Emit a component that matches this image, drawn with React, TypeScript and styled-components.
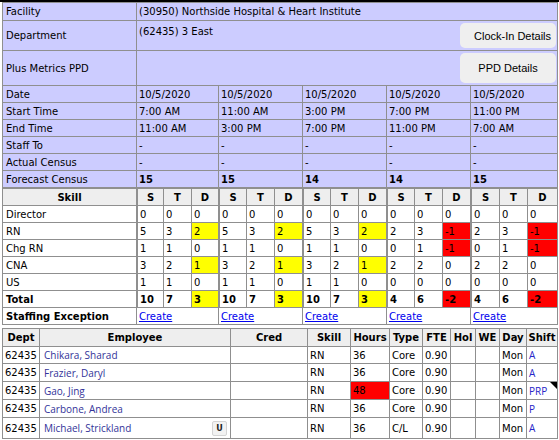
import React from 'react';
import styled, { createGlobalStyle, css } from 'styled-components';

const LINE = '#8f8f8f';
const LAV = '#ccccff';
const HEAD = '#eeeeee';
const YELLOW = '#ffff00';
const RED = '#ff0000';

const GlobalStyle = createGlobalStyle`
  html, body { margin: 0; padding: 0; background: #ffffff; }
  body {
    font-family: "DejaVu Sans", Verdana, sans-serif;
    font-size: 10px;
    color: #000000;
  }
`;

type Tone = 'plain' | 'warn' | 'alert';
const toneBg = (t?: Tone, fallback = '#ffffff') =>
  t === 'warn' ? YELLOW : t === 'alert' ? RED : fallback;

const Page = styled.div`
  width: 559px;
  display: flex;
  flex-direction: column;
`;

const TopRule = styled.div`
  height: 2px;
  background: #000000;
`;

const Sheet = styled.div`
  padding-left: 2px;
  display: flex;
  flex-direction: column;
  gap: 3px;
`;

const SummaryGrid = styled.div`
  display: grid;
  grid-template-columns: 133px 26px 27px 26px repeat(9, 27px) 28px 27px 29px;
  grid-template-rows: 17px 29px 34px repeat(6, 16px) 17px repeat(6, 16px) 16px;
  gap: 1px;
  background: ${LINE};
  border: 1px solid ${LINE};
  width: max-content;
`;

const InfoLabel = styled.div`
  background: ${LAV};
  display: flex;
  align-items: center;
  padding: 0 3px;
  white-space: nowrap;
`;

const InfoValue = styled.div<{ $span: number; $bold?: boolean }>`
  grid-column: span ${p => p.$span};
  background: ${LAV};
  display: flex;
  align-items: center;
  padding: 0 2px;
  white-space: nowrap;
  font-weight: ${p => (p.$bold ? 'bold' : 'normal')};
`;

const DeptValue = styled.div`
  grid-column: span 15;
  background: ${LAV};
  display: flex;
  justify-content: space-between;
  align-items: flex-start;
  padding: 0 1px 0 2px;
`;

const DeptText = styled.span`
  padding-top: 5px;
  white-space: nowrap;
`;

const MetricsValue = styled.div`
  grid-column: span 15;
  background: ${LAV};
  display: flex;
  justify-content: flex-end;
  align-items: center;
  padding-right: 1px;
`;

const ActionButton = styled.button<{ $h: number; $top?: number; $justify?: string; $padL?: number; $padR?: number }>`
  width: 96px;
  height: ${p => p.$h}px;
  margin-top: ${p => p.$top ?? 0}px;
  background: #efefef;
  border: none;
  border-radius: 5px;
  display: flex;
  align-items: center;
  justify-content: ${p => p.$justify ?? 'center'};
  padding: 0 ${p => p.$padR ?? 0}px 0 ${p => p.$padL ?? 0}px;
  font-family: "Liberation Sans", Arial, sans-serif;
  font-size: 11px;
  color: #000000;
  white-space: nowrap;
`;

const SkillHeadLabel = styled.div`
  background: ${HEAD};
  border-top: 1px solid ${LINE};
  display: flex;
  align-items: center;
  justify-content: center;
  font-weight: bold;
`;

const SkillHeadCell = styled.div<{ $groupStart?: boolean }>`
  background: ${HEAD};
  border-top: 1px solid ${LINE};
  ${p => p.$groupStart && css`border-left: 1px solid ${LINE};`}
  display: flex;
  align-items: center;
  justify-content: center;
  font-weight: bold;
`;

const SkillName = styled.div<{ $bold?: boolean }>`
  background: #ffffff;
  display: flex;
  align-items: center;
  padding: 0 3px;
  white-space: nowrap;
  font-weight: ${p => (p.$bold ? 'bold' : 'normal')};
`;

const CountCell = styled.div<{ $tone?: Tone; $groupStart?: boolean; $bold?: boolean }>`
  background: ${p => toneBg(p.$tone)};
  ${p => p.$groupStart && css`border-left: 1px solid ${LINE};`}
  display: flex;
  align-items: center;
  padding: 0 2px;
  font-weight: ${p => (p.$bold ? 'bold' : 'normal')};
`;

const ExceptionLabel = styled.div`
  background: #ffffff;
  display: flex;
  align-items: center;
  padding: 0 3px;
  font-weight: bold;
  white-space: nowrap;
`;

const CreateCell = styled.div`
  grid-column: span 3;
  background: #ffffff;
  display: flex;
  align-items: center;
  padding: 0 2px;
`;

const CreateLink = styled.a`
  color: #0000ee;
  text-decoration: underline;
  cursor: pointer;
`;

const RosterGrid = styled.div`
  display: grid;
  grid-template-columns: 36px 190px 76px 42px 38px 32px 27px 24px 23px 26px 30px;
  grid-template-rows: 17px 16px 17px 17px 17px 20px;
  gap: 1px;
  background: ${LINE};
  border: 1px solid ${LINE};
  width: max-content;
`;

const RosterHead = styled.div`
  background: ${HEAD};
  display: flex;
  align-items: center;
  justify-content: center;
  font-weight: bold;
  white-space: nowrap;
`;

const RosterCell = styled.div<{ $tone?: Tone }>`
  background: ${p => toneBg(p.$tone)};
  display: flex;
  align-items: center;
  padding: 0 2px;
  white-space: nowrap;
`;

const NameCell = styled.div`
  background: #ffffff;
  display: flex;
  align-items: center;
  justify-content: space-between;
  padding: 0 3px 0 4px;
`;

const NameLink = styled.a`
  font-family: "Open Sans", "Liberation Sans", sans-serif;
  font-size: 10px;
  color: #333399;
  text-decoration: none;
  white-space: nowrap;
`;

const UButton = styled.span`
  width: 15px;
  height: 15px;
  box-sizing: border-box;
  border: 1px solid #d4d4d4;
  border-radius: 2px;
  background: #f2f2f2;
  display: flex;
  align-items: center;
  justify-content: center;
  font-size: 8px;
  font-weight: bold;
  color: #222222;
`;

const ShiftCell = styled.div<{ $flag?: boolean }>`
  position: relative;
  background: #ffffff;
  display: flex;
  align-items: center;
  padding: 0 2px;
  font-family: "Open Sans", "Liberation Sans", sans-serif;
  font-size: 10px;
  color: #2626c8;
  ${p =>
    p.$flag &&
    css`
      &::after {
        content: '';
        position: absolute;
        top: 0;
        right: 0;
        width: 0;
        height: 0;
        border-top: 7px solid #000000;
        border-left: 7px solid transparent;
      }
    `}
`;

type Shift = { date: string; start: string; end: string; census: string };

const shifts: Shift[] = [
  { date: '10/5/2020', start: '7:00 AM', end: '11:00 AM', census: '15' },
  { date: '10/5/2020', start: '11:00 AM', end: '3:00 PM', census: '15' },
  { date: '10/5/2020', start: '3:00 PM', end: '7:00 PM', census: '14' },
  { date: '10/5/2020', start: '7:00 PM', end: '11:00 PM', census: '14' },
  { date: '10/5/2020', start: '11:00 PM', end: '7:00 AM', census: '15' },
];

type Count = [string, Tone?];
type SkillRow = { name: string; bold?: boolean; groups: Count[][] };

const ok = (s: string, t: string, d: string, tone?: Tone): Count[] => [[s], [t], [d, tone]];

const skills: SkillRow[] = [
  { name: 'Director', groups: [ok('0', '0', '0'), ok('0', '0', '0'), ok('0', '0', '0'), ok('0', '0', '0'), ok('0', '0', '0')] },
  { name: 'RN', groups: [ok('5', '3', '2', 'warn'), ok('5', '3', '2', 'warn'), ok('5', '3', '2', 'warn'), ok('2', '3', '-1', 'alert'), ok('2', '3', '-1', 'alert')] },
  { name: 'Chg RN', groups: [ok('1', '1', '0'), ok('1', '1', '0'), ok('1', '1', '0'), ok('0', '1', '-1', 'alert'), ok('0', '1', '-1', 'alert')] },
  { name: 'CNA', groups: [ok('3', '2', '1', 'warn'), ok('3', '2', '1', 'warn'), ok('3', '2', '1', 'warn'), ok('2', '2', '0'), ok('2', '2', '0')] },
  { name: 'US', groups: [ok('1', '1', '0'), ok('1', '1', '0'), ok('1', '1', '0'), ok('0', '0', '0'), ok('0', '0', '0')] },
  { name: 'Total', bold: true, groups: [ok('10', '7', '3', 'warn'), ok('10', '7', '3', 'warn'), ok('10', '7', '3', 'warn'), ok('4', '6', '-2', 'alert'), ok('4', '6', '-2', 'alert')] },
];

type Staff = { name: string; hours: string; hoursTone?: Tone; type: string; shift: string; flag?: boolean; unit?: boolean };

const staff: Staff[] = [
  { name: 'Chikara, Sharad', hours: '36', type: 'Core', shift: 'A' },
  { name: 'Frazier, Daryl', hours: '36', type: 'Core', shift: 'A' },
  { name: 'Gao, Jing', hours: '48', hoursTone: 'alert', type: 'Core', shift: 'PRP', flag: true },
  { name: 'Carbone, Andrea', hours: '36', type: 'Core', shift: 'P' },
  { name: 'Michael, Strickland', hours: '36', type: 'C/L', shift: 'A', unit: true },
];

const rosterHeads = ['Dept', 'Employee', 'Cred', 'Skill', 'Hours', 'Type', 'FTE', 'Hol', 'WE', 'Day', 'Shift'];

export default function App() {
  const infoRow = (label: string, pick: (s: Shift) => string, bold?: boolean) => (
    <React.Fragment key={label}>
      <InfoLabel>{label}</InfoLabel>
      {shifts.map((s, i) => (
        <InfoValue key={i} $span={3} $bold={bold}>
          {pick(s)}
        </InfoValue>
      ))}
    </React.Fragment>
  );

  return (
    <>
      <GlobalStyle />
      <Page>
        <TopRule />
        <Sheet>
          <SummaryGrid>
            <InfoLabel>Facility</InfoLabel>
            <InfoValue $span={15}>(30950) Northside Hospital &amp; Heart Institute</InfoValue>

            <InfoLabel>Department</InfoLabel>
            <DeptValue>
              <DeptText>(62435) 3 East</DeptText>
              <ActionButton $h={25} $top={2} $justify="flex-start" $padL={14}>
                Clock-In Details
              </ActionButton>
            </DeptValue>

            <InfoLabel>Plus Metrics PPD</InfoLabel>
            <MetricsValue>
              <ActionButton $h={30}>PPD Details</ActionButton>
            </MetricsValue>

            {infoRow('Date', s => s.date)}
            {infoRow('Start Time', s => s.start)}
            {infoRow('End Time', s => s.end)}
            {infoRow('Staff To', () => '-')}
            {infoRow('Actual Census', () => '-')}
            {infoRow('Forecast Census', s => s.census, true)}

            <SkillHeadLabel>Skill</SkillHeadLabel>
            {shifts.map((_, g) =>
              ['S', 'T', 'D'].map((h, k) => (
                <SkillHeadCell key={`${g}-${h}`} $groupStart={k === 0}>
                  {h}
                </SkillHeadCell>
              ))
            )}

            {skills.map(row => (
              <React.Fragment key={row.name}>
                <SkillName $bold={row.bold}>{row.name}</SkillName>
                {row.groups.map((grp, g) =>
                  grp.map(([v, tone], k) => (
                    <CountCell key={`${g}-${k}`} $tone={tone} $groupStart={k === 0} $bold={row.bold}>
                      {v}
                    </CountCell>
                  ))
                )}
              </React.Fragment>
            ))}

            <ExceptionLabel>Staffing Exception</ExceptionLabel>
            {shifts.map((_, i) => (
              <CreateCell key={i}>
                <CreateLink>Create</CreateLink>
              </CreateCell>
            ))}
          </SummaryGrid>

          <RosterGrid>
            {rosterHeads.map(h => (
              <RosterHead key={h}>{h}</RosterHead>
            ))}
            {staff.map(p => (
              <React.Fragment key={p.name}>
                <RosterCell>62435</RosterCell>
                <NameCell>
                  <NameLink>{p.name}</NameLink>
                  {p.unit && <UButton>U</UButton>}
                </NameCell>
                <RosterCell />
                <RosterCell>RN</RosterCell>
                <RosterCell $tone={p.hoursTone}>{p.hours}</RosterCell>
                <RosterCell>{p.type}</RosterCell>
                <RosterCell>0.90</RosterCell>
                <RosterCell />
                <RosterCell />
                <RosterCell>Mon</RosterCell>
                <ShiftCell $flag={p.flag}>{p.shift}</ShiftCell>
              </React.Fragment>
            ))}
          </RosterGrid>
        </Sheet>
      </Page>
    </>
  );
}
